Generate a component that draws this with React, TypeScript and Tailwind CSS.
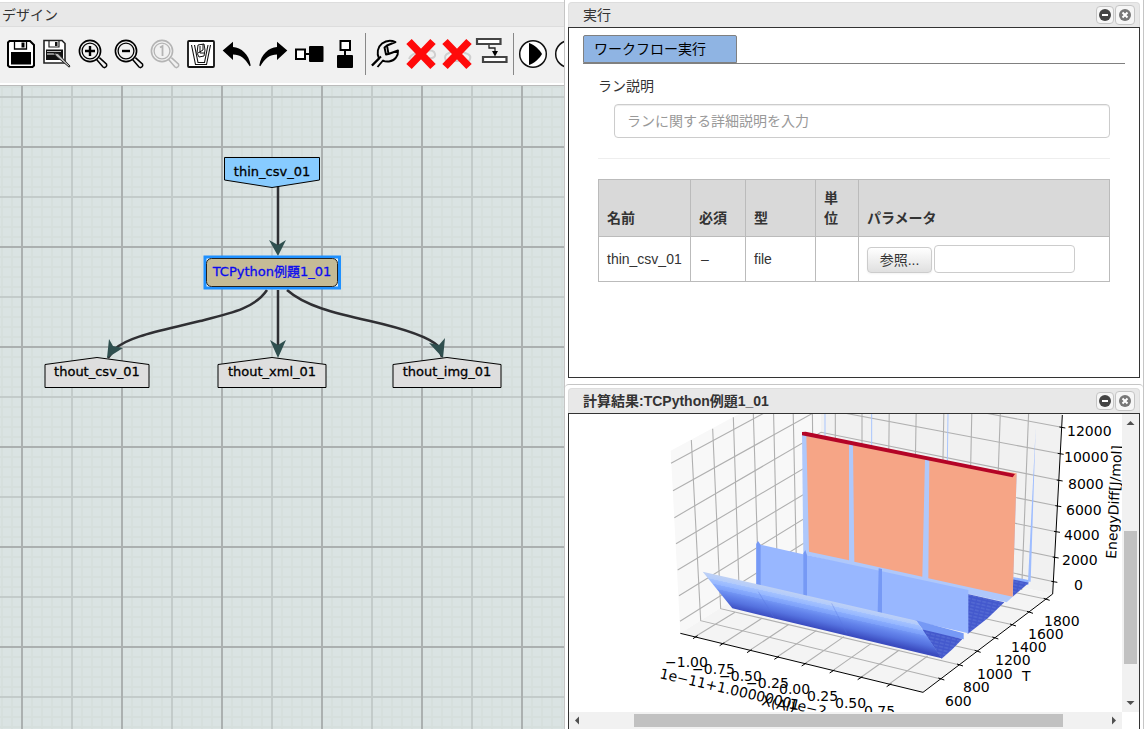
import { ReactNode } from 'react';

// ── Data ──────────────────────────────────────────────────────────────────────

const Z_LABELS = [
  { text: '12000', x: 498, y: 22 },
  { text: '10000', x: 495, y: 48 },
  { text: '8000', x: 499, y: 75 },
  { text: '6000', x: 497, y: 101 },
  { text: '4000', x: 495, y: 126 },
  { text: '2000', x: 493, y: 151 },
  { text: '0', x: 505, y: 176 },
];

const T_LABELS = [
  { text: '1800', x: 475, y: 212 },
  { text: '1600', x: 459, y: 225 },
  { text: '1400', x: 442, y: 238 },
  { text: '1200', x: 426, y: 251 },
  { text: '1000', x: 408, y: 265 },
  { text: '800', x: 394, y: 278 },
  { text: '600', x: 376, y: 292 },
  { text: 'T', x: 453, y: 267 },
];

const X_LABELS = [
  { text: '−1.00', x: 96, y: 253 },
  { text: '−0.75', x: 123, y: 260 },
  { text: '−0.50', x: 150, y: 267 },
  { text: '−0.25', x: 177, y: 274 },
  { text: '0.00', x: 210, y: 280 },
  { text: '0.25', x: 238, y: 287 },
  { text: '0.50', x: 266, y: 294 },
  { text: '0.75', x: 295, y: 302 },
];

const OUTPUTS = [
  { label: 'thout_csv_01', left: 45, right: 149 },
  { label: 'thout_xml_01', left: 218, right: 326 },
  { label: 'thout_img_01', left: 393, right: 501 },
];

// ── Toolbar icons ─────────────────────────────────────────────────────────────

function Lens({ color = '#000', children }: { color?: string; children: ReactNode }) {
  return (
    <g fill="none" stroke={color}>
      <circle cx="12" cy="12" r="10.6" strokeWidth="1.6" />
      <circle cx="12" cy="12" r="7.9" strokeWidth="1.3" />
      <path d="M18.6 20.6 25 28q1.4 1.2 2.8 0t.8-2.8l-7.2-6.6" strokeWidth="1.5" />
      {children}
    </g>
  );
}

function SaveIcon() {
  return (
    <>
      <path d="M3.5 2H24l4 4v20.5L26.5 28h-23L2 26.5v-23z" fill="#fff" stroke="#000" strokeWidth="2" />
      <path d="M8.5 2v8h12V2" fill="none" stroke="#000" strokeWidth="1.3" />
      <path d="M15.5 3.5h3v5h-3zM5 13h20v12.5H5z" fill="#000" />
    </>
  );
}

function SaveAsIcon() {
  return (
    <>
      <path d="M2 1.5h18l3 3V24H2z" fill="#fff" stroke="#222" strokeWidth="1.6" />
      <path d="M7 2v6h10V2" fill="none" stroke="#222" strokeWidth="1.2" />
      <path d="M13 3h2.5v4H13zM4 10.5h17V21H4z" fill="#111" />
      <path d="M5 12.5h14" stroke="#bbb" strokeWidth="1" />
      <path d="M5 15h9" stroke="#fff" strokeWidth="1" />
      <path d="m12 14 4 .5 12 12.5-.8 1.2L14 17z" fill="#bbb" stroke="#222" strokeWidth="1" />
    </>
  );
}

function TrashIcon() {
  return (
    <g fill="none" stroke="#111">
      <rect x="2" y="2" width="26" height="26" rx="1" strokeWidth="1.8" fill="#fff" />
      <path d="M5.5 6 9.5 25.500h11l4-19.500M8.500 6l3.500 17.500h6.500L22 6" strokeWidth="1.1" />
      <path d="m12 6 6-1 1 6-1 6-5 1-2-4zM14 7v7h4M17 5v6l-5 3" strokeWidth="1" />
    </g>
  );
}

const UNDO_PATH = 'M.7 11.5 11 2.7V8c8 .5 16 7 17.7 18.5l-1 .8C23 19 18 15.5 11 15.5V21z';

function WrenchIcon() {
  return (
    <g fill="none" stroke="#000" strokeWidth="1.9" strokeLinejoin="round">
      <path d="M2 26.5 9 19.500c-2.500-5-1.500-11.500 3-15C16 1.500 21 1 25.500 3L17 6.500l1.500 8.500L28 11.500c.5 5-3 10.500-9 11-2.500.2-4.500 0-6-1L7.500 28" />
      <path d="M2 26.5 11 17.5M17 6.5 14.500 8.500l1.500 7 2.500-.5" />
    </g>
  );
}

function CrossIcon({ ghost }: { ghost: string }) {
  return (
    <>
      <path d={ghost} fill="none" stroke="#cfcfcf" strokeWidth="2" />
      <path d="m3 2.500 24 25M27 2.500 3 27.500" stroke="#ff0a0a" strokeWidth="7.5" />
    </>
  );
}

function FlowIcon() {
  return (
    <>
      <g fill="#fff" stroke="#444" strokeWidth="2.2">
        <path d="M-1 0h23.5v5H-1zM5 18h23.5v5H5z" />
      </g>
      <path d="M11 6v3h6v6" fill="none" stroke="#222" strokeWidth="1.3" />
      <path d="m14 12 3 5.500 3-5.500z" fill="#000" />
    </>
  );
}

function PlayIcon() {
  return (
    <>
      <circle cx="15" cy="15" r="13.3" fill="#fff" stroke="#111" strokeWidth="1.5" />
      <path d="M11 4c5 1.500 11 7 13 11-2 4-8 9.500-13 11z" fill="#000" />
    </>
  );
}

const TOOLS: { name: string; icon: ReactNode }[] = [
  { name: '保存', icon: <SaveIcon /> },
  { name: '名前を付けて保存', icon: <SaveAsIcon /> },
  { name: '拡大', icon: <Lens><path d="M12 7v10M7 12h10" strokeWidth="2.4" /></Lens> },
  { name: '縮小', icon: <Lens><path d="M8 12h8" strokeWidth="2.4" /></Lens> },
  { name: '等倍', icon: <Lens color="#b4b4b4"><path d="m10 8.5 2.5-1.5v10" strokeWidth="1.8" /></Lens> },
  { name: '削除', icon: <TrashIcon /> },
  { name: '元に戻す', icon: <path d={UNDO_PATH} /> },
  { name: 'やり直し', icon: <path d={UNDO_PATH} transform="matrix(-1 0 0 1 30 0)" /> },
  {
    name: '横に整列',
    icon: (
      <>
        <path d="M2 10.5h9V20H2zM11 15h5" fill="#fff" stroke="#000" strokeWidth="2" />
        <rect x="15" y="7" width="14.5" height="16" rx="1" />
      </>
    ),
  },
  {
    name: '縦に整列',
    icon: (
      <>
        <path d="M10.5 2H20v9h-9.5zM15 11v6" fill="#fff" stroke="#000" strokeWidth="2" />
        <rect x="7" y="16" width="16" height="13" rx="1" />
      </>
    ),
  },
];

const TOOLS_EDIT: { name: string; icon: ReactNode }[] = [
  { name: '設定', icon: <WrenchIcon /> },
  { name: '接続を解除', icon: <CrossIcon ghost="M3 20q3-6 9-6M20 12q8-2 9 3t-8 4" /> },
  { name: 'すべて解除', icon: <CrossIcon ghost="M4 22q-3-6 3-8 8-6 16 0 8 2 4 8z" /> },
  { name: '自動配置', icon: <FlowIcon /> },
];

function ToolButton({ name, children }: { name: string; children: ReactNode }) {
  return (
    <button type="button" aria-label={name} className="flex w-9 shrink-0 justify-center">
      <svg width="30" height="30" viewBox="0 0 30 30" className="overflow-visible">
        {children}
      </svg>
    </button>
  );
}

function Separator() {
  return (
    <div className="flex h-[42px] w-1 shrink-0 justify-center">
      <div className="w-px bg-[#888]" />
    </div>
  );
}

// ── Workflow diagram ──────────────────────────────────────────────────────────

function WorkflowCanvas() {
  return (
    <svg className="block h-full w-full font-['DejaVu_Sans','Noto_Sans_CJK_JP',sans-serif] text-[13px]">
      <defs>
        <pattern id="minor" x="-3" y="2" width="10" height="10" patternUnits="userSpaceOnUse">
          <path d="M5 0v10M0 5h10" stroke="#d6dfdd" strokeWidth="2" />
        </pattern>
        <pattern id="middle" x="-3" y="22" width="50" height="50" patternUnits="userSpaceOnUse">
          <path d="M25 0v50M0 25h50" stroke="#c3cbca" strokeWidth="2" />
        </pattern>
        <pattern id="major" x="-28" y="97" width="100" height="100" patternUnits="userSpaceOnUse">
          <path d="M50 0v100M0 50h100" stroke="#abb0b0" strokeWidth="2" />
        </pattern>
      </defs>
      <g transform="translate(0 -86)">
        <rect y="86" width="100%" height="100%" fill="#dae3e3" />
        <rect y="86" width="100%" height="100%" fill="url(#minor)" />
        <rect y="86" width="100%" height="100%" fill="url(#middle)" />
        <rect y="86" width="100%" height="100%" fill="url(#major)" />

        {/* links */}
        <g fill="none" stroke="#2f2f33" strokeWidth="2.5">
          <path d="M278 186v64M278 290v60" />
          <path d="M267 290C255 308 232 313 200 321C165 330 128 336 115 349L108 358" />
          <path d="M287 290C305 306 334 313 370 321C405 329 430 338 438 346L442 357" />
        </g>
        <g fill="#2f4f4f">
          <path d="m278 256-9-16 9 5 8-5zM278 358l-8-18 8 5 8-5z" />
          <path d="m107 358 2-19 4 7 10 2zM443 358l-14-15 10 2 6-7z" />
        </g>

        {/* input */}
        <path d="M224.5 157.5h95V180L272 187.5 224.5 180z" fill="#87cbff" stroke="#000" />
        <text x="272" y="176" textAnchor="middle" stroke="#000" strokeWidth=".3">thin_csv_01</text>

        {/* selected tool */}
        <rect x="205" y="257" width="134.5" height="31" fill="#e8efef" stroke="#1e90ff" strokeWidth="3" />
        <rect x="206.5" y="258.5" width="131" height="28" rx="5" fill="#c5bb96" stroke="#222" />
        <text x="272" y="276" textAnchor="middle" fill="#0a0af0" stroke="#0a0af0" strokeWidth=".3">TCPython例題1_01</text>

        {/* outputs */}
        {OUTPUTS.map(({ label, left, right }) => {
          const mid = (left + right) / 2;
          return (
            <g key={label}>
              <path d={`M${left} 364.5 ${mid} 357.5 ${right} 364.5V387.5H${left}z`} fill="#dedede" stroke="#000" />
              <text x={mid} y="376" textAnchor="middle" stroke="#000" strokeWidth=".3">{label}</text>
            </g>
          );
        })}
      </g>
    </svg>
  );
}

// ── Result chart ──────────────────────────────────────────────────────────────

function SurfaceChart() {
  return (
    <svg width="553" height="298" viewBox="0 0 553 298" className="block font-['DejaVu_Sans',sans-serif] text-[14px]">
      <defs>
        <linearGradient id="valley" gradientUnits="userSpaceOnUse" x1="735" y1="680" x2="716" y2="765">
          <stop offset="0" stopColor="#bdd0f5" />
          <stop offset=".14" stopColor="#b2cbfc" />
          <stop offset=".15" stopColor="#a3c1fe" />
          <stop offset=".29" stopColor="#96b7ff" />
          <stop offset=".3" stopColor="#89acfd" />
          <stop offset=".44" stopColor="#7da0f9" />
          <stop offset=".45" stopColor="#7295f4" />
          <stop offset=".6" stopColor="#6282ea" />
          <stop offset=".75" stopColor="#5572df" />
          <stop offset="1" stopColor="#3b4cc0" />
        </linearGradient>
        <pattern id="mesh" width="16" height="10" patternUnits="userSpaceOnUse" patternTransform="rotate(13)">
          <rect width="16" height="10" fill="#4459cd" />
          <path d="M0 5h12" stroke="#7189e0" strokeWidth="1.5" />
        </pattern>
      </defs>

      <g transform="scale(.33333) translate(-12 -132)">
        {/* panes */}
        <path d="M317 242 768 0v523L346 790z" fill="#f8f8f8" />
        <path d="M768 0 1498 20 1463 672 768 523z" fill="#f1f1f1" />
        <path d="M346 790 768 523 1463 672 1074 967z" fill="#f4f4f4" />

        {/* grid */}
        <g stroke="#b0b0b0" strokeWidth="3.3" fill="none">
          <path d="M379 210 407 752 1128 927M443 176 467 716 1185 885M505 142 523 680 1238 843M564 100 581 644 1290 803M625 100 637 608 1343 764M684 100 694 572 1395 726M742 100 746 538 1445 688" />
          <path d="M318 280 768 37 1490 172M324 362 768 116 1486 251M328 443 768 187 1482 331M333 521 768 265 1478 408M338 600 768 342 1474 485M342 677 768 415 1470 562M345 754 768 487 1467 635" />
          <path d="M811 100V530M891 100V550M973 100 968 560M1054 100 1046 580M1137 100 1128 600M1221 100 1210 620M1307 100 1288 640M1392 100 1370 660" />
          <path d="m390 800 120-73M472 822l119-77M553 842l119-79M635 862l119-80M718 882l119-82M800 904l118-83M885 924l118-84M970 944l118-86" />
        </g>

        {/* axes and ticks */}
        <path d="M346 790 1074 967 1463 672 1492 135" fill="none" stroke="#000" strokeWidth="3" />
        <path
          d="m384 806 14-9M464 827l14-9M546 848l14-9M628 868l14-9M710 888l14-9M794 909l14-9M878 929l14-9M965 950l14-9M1120 924l18 6M1176 882l18 6M1229 841l18 6M1282 801l18 6M1335 762l18 6M1386 724l18 6M1436 685l18 6M1483 171l18 3M1478 250l18 3M1475 330l18 3M1471 407l18 3M1467 484l18 3M1463 561l18 3M1459 634l18 3"
          stroke="#000"
          strokeWidth="3"
        />

        {/* far spikes */}
        <path d="M780 132v70M920 132v100M1149 132l-2 145" stroke="#a9c5fd" strokeWidth="3" />
        <path d="m1412 175-23 460h8z" fill="#9dbcff" />

        {/* back floor */}
        <path d="M1340 620 1390 630 1390 645 1340 640z" fill="#8fb1fe" />
        <path d="m1342 628 50 10-49 42z" fill="url(#mesh)" />

        {/* tall wall */}
        <path d="M711 192 1355 315 1343 680 1325 697 1210 672 715 553z" fill="#afc8fb" />
        <path d="M724 198 852 222V571L732 545z" fill="#f6a586" />
        <path d="M864 224 1080 267 1072 620 868 575z" fill="#f6a586" />
        <path d="M1093 270 1355 310 1343 680 1090 625z" fill="#f6a586" />
        <path d="M711 186 722 185 1350 312 1343 322 711 196z" fill="#b40426" />

        {/* middle floor */}
        <path d="M1208 672 1318 697 1268 745 1208 792z" fill="url(#mesh)" />

        {/* low wall */}
        <path d="M574 521 711 552 1210 660V790L574 645z" fill="#98b7ff" />
        <path d="M574 521 579 513 587 524V650L574 645zM715 550 721 540 726 555V680L715 677zM941 595 951 597V730L938 727z" fill="#7699f5" />

        {/* front floor */}
        <path d="M1050 750 1196 790V808L1078 784z" fill="#7699f5" />
        <path d="M1070 778 1192 807 1162 838 1130 866z" fill="url(#mesh)" />

        {/* front slope */}
        <path d="M413 605 1055 752 1130 865 502 715z" fill="url(#valley)" />
        <path d="m580 665 48 80M800 700l45 90" stroke="#5572df" strokeWidth="1" />
      </g>

      {[...Z_LABELS, ...T_LABELS, ...X_LABELS].map(({ text, x, y }) => (
        <text key={`${text}-${x}`} x={x} y={y}>{text}</text>
      ))}
      <text transform="translate(90 264) rotate(13)">1e−11+1.00000001</text>
      <text transform="translate(192 291) rotate(13)">X(Al)</text>
      <text transform="translate(219 294) rotate(13)">1e−2</text>
      <text transform="translate(547 145) rotate(-87)">EnegyDiff[J/mol]</text>
    </svg>
  );
}

// ── Panels ────────────────────────────────────────────────────────────────────

function PanelHeader({ title, bold = false }: { title: string; bold?: boolean }) {
  return (
    <header className="flex h-[25px] shrink-0 items-center rounded-t border border-b-0 border-[#ddd] bg-[#e8e8e8] pr-1 pl-3.5">
      <h2 className={bold ? 'flex-1 font-bold' : 'flex-1'}>{title}</h2>
      <button type="button" aria-label="最小化" className="flex size-[18px] items-center justify-center rounded-sm border border-[#c5c5c5] bg-[#f6f6f6]">
        <svg width="12" height="12" viewBox="0 0 12 12">
          <circle cx="6" cy="6" r="6" fill="#444" />
          <path d="M3 6h6" stroke="#fff" strokeWidth="2" />
        </svg>
      </button>
      <button type="button" aria-label="閉じる" className="ml-px flex size-5 items-center justify-center rounded-sm border border-[#c5c5c5] bg-[#f6f6f6]">
        <svg width="12" height="12" viewBox="0 0 12 12">
          <circle cx="6" cy="6" r="6" fill="#777" />
          <path d="m3.5 3.5 5 5M8.5 3.5l-5 5" stroke="#fff" strokeWidth="2" />
        </svg>
      </button>
    </header>
  );
}

function RunPanel() {
  return (
    <div className="min-h-0 flex-1 border border-[#333] bg-white px-3.5 pt-[7px]">
      <div role="tablist" className="flex border-b border-[#808080]">
        <button type="button" role="tab" aria-selected="true" className="h-7 w-[154px] rounded-t-xs border border-[#808080] bg-[#8fb4e3] px-2.5 text-left text-black">
          ワークフロー実行
        </button>
      </div>
      <div className="px-[15px] pt-3">
        <label htmlFor="run-note" className="block h-5">ラン説明</label>
        <div className="mt-2 pl-4">
          <input
            id="run-note"
            type="text"
            placeholder="ランに関する詳細説明を入力"
            className="block h-[34px] w-full rounded border border-[#ccc] px-3 shadow-[inset_0_1px_1px_rgba(0,0,0,0.075)] placeholder:text-[#999]"
          />
        </div>
        <hr className="my-5 border-[#eee]" />
        <table className="w-full table-fixed border-collapse text-left">
          <colgroup>
            <col className="w-[92px]" />
            <col className="w-[55px]" />
            <col className="w-[70px]" />
            <col className="w-[43px]" />
            <col />
          </colgroup>
          <thead>
            <tr className="bg-[#d9d9d9]">
              {['名前', '必須', '型', '単位', 'パラメータ'].map((head) => (
                <th key={head} scope="col" className="h-[57px] border border-[#bbb] p-2 align-bottom font-bold">
                  {head === '単位' ? <>単<br />位</> : head}
                </th>
              ))}
            </tr>
          </thead>
          <tbody>
            <tr>
              <td className="h-[45px] border border-[#bbb] px-2">thin_csv_01</td>
              <td className="border border-[#bbb] px-2.5">–</td>
              <td className="border border-[#bbb] px-2">file</td>
              <td className="border border-[#bbb] px-2" />
              <td className="border border-[#bbb] px-2">
                <div className="flex items-end gap-0.5">
                  <button type="button" className="h-[26px] w-[65px] rounded border border-[#ccc] bg-linear-to-b from-white to-[#e0e0e0] text-center shadow-xs">
                    参照...
                  </button>
                  <input type="text" aria-label="ファイル名" className="h-7 w-[141px] rounded border border-[#ccc] px-1" />
                </div>
              </td>
            </tr>
          </tbody>
        </table>
      </div>
    </div>
  );
}

function Arrow({ d }: { d: string }) {
  return (
    <svg width="17" height="17" viewBox="0 0 17 17" className="shrink-0">
      <path d={d} fill="#505050" />
    </svg>
  );
}

function ResultPanel() {
  return (
    <div className="grid min-h-0 flex-1 grid-cols-[minmax(0,1fr)_17px] grid-rows-[minmax(0,1fr)_17px] overflow-hidden border border-b-0 border-[#333] bg-white">
      <div className="overflow-hidden text-black">
        <SurfaceChart />
      </div>
      <div className="flex flex-col items-center bg-[#f1f1f1]">
        <Arrow d="M4.5 11 8.5 7l4 4z" />
        <div className="flex-[100]" />
        <div className="w-[13px] flex-[133] bg-[#c1c1c1]" />
        <div className="flex-[31]" />
        <Arrow d="m4.5 6 4 4 4-4z" />
      </div>
      <div className="flex items-center bg-[#f1f1f1]">
        <Arrow d="M10 4.5 6 8.5l4 4z" />
        <div className="flex-[48]" />
        <div className="h-[13px] flex-[429] bg-[#c1c1c1]" />
        <div className="flex-[42]" />
        <Arrow d="m7 4.5 4 4-4 4z" />
      </div>
    </div>
  );
}

// ── Root export ───────────────────────────────────────────────────────────────

export default function App() {
  return (
    <div className="grid h-screen grid-cols-[565fr_580fr] overflow-hidden bg-white font-['Liberation_Sans','Noto_Sans_CJK_JP',sans-serif] text-[14px] leading-5 text-[#333]">
      <section className="flex min-w-0 flex-col overflow-hidden border-r border-[#c5c5c5] pt-0.5">
        <header className="flex h-[25px] shrink-0 items-center border-y border-[#ddd] bg-[#e8e8e8] pl-0.5">
          <h2>デザイン</h2>
        </header>
        <div role="toolbar" className="flex h-14 shrink-0 items-center overflow-hidden bg-[#f1f1f1] pb-0.5 pl-[3px]">
          {TOOLS.map(({ name, icon }) => <ToolButton key={name} name={name}>{icon}</ToolButton>)}
          <Separator />
          {TOOLS_EDIT.map(({ name, icon }) => <ToolButton key={name} name={name}>{icon}</ToolButton>)}
          <Separator />
          <ToolButton name="実行"><PlayIcon /></ToolButton>
          <ToolButton name="停止"><PlayIcon /></ToolButton>
        </div>
        <div className="mt-0.5 min-h-0 flex-1 border-t border-[#bbb] text-black">
          <WorkflowCanvas />
        </div>
      </section>

      <div className="mr-px grid min-w-0 grid-rows-[384fr_345fr] border-r border-[#c5c5c5]">
        <section className="flex min-h-0 flex-col px-[3px] pt-0.5 pb-1.5">
          <PanelHeader title="実行" />
          <RunPanel />
        </section>
        <section className="flex min-h-0 flex-col rounded-t border-t border-[#c5c5c5] px-[3px] pt-[3px]">
          <PanelHeader title="計算結果:TCPython例題1_01" bold />
          <ResultPanel />
        </section>
      </div>
    </div>
  );
}
